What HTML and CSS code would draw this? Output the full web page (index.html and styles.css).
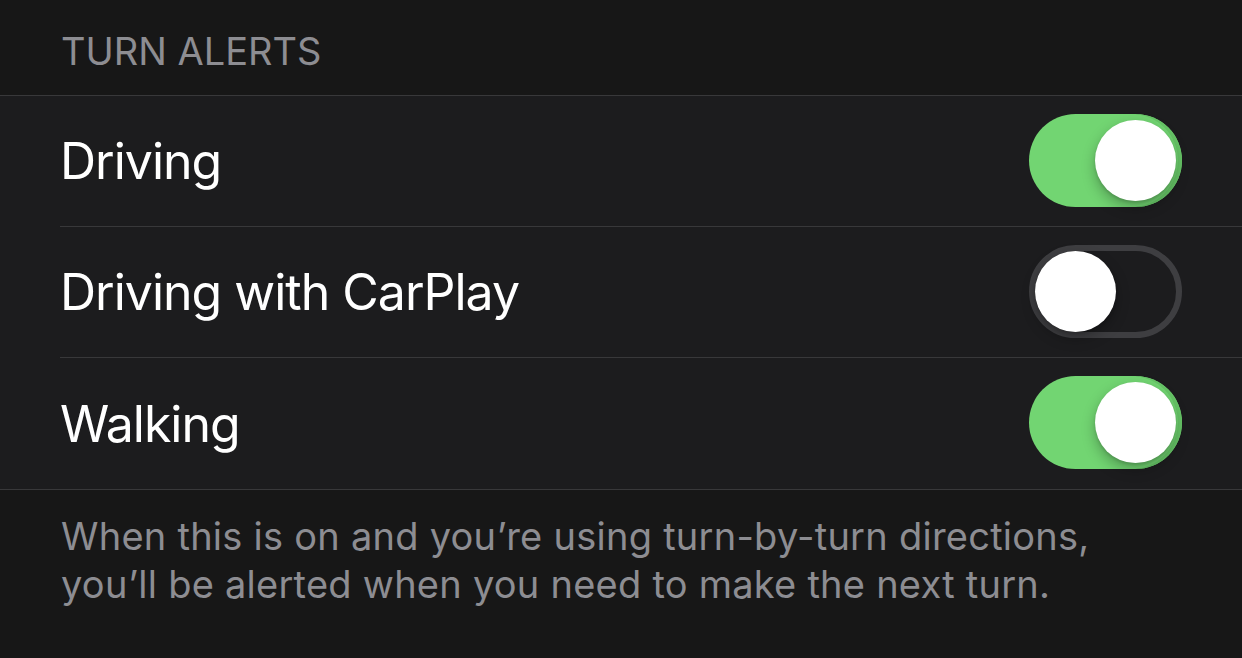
FILE: index.html
```html
<!DOCTYPE html>
<html lang="en">
<head>
<meta charset="utf-8">
<link rel="stylesheet" href="styles.css">
</head>
<body>
<div class="page">
  <div class="section-header">TURN ALERTS</div>
  <div class="group">
    <div class="row">
      <span class="label">Driving</span>
      <span class="switch on"><span class="thumb"></span></span>
    </div>
    <div class="row">
      <span class="label">Driving with CarPlay</span>
      <span class="switch off"><span class="thumb"></span></span>
    </div>
    <div class="row">
      <span class="label">Walking</span>
      <span class="switch on"><span class="thumb"></span></span>
    </div>
  </div>
  <div class="section-footer">When this is on and you’re using turn-by-turn directions, you’ll be alerted when you need to make the next turn.</div>
</div>
</body>
</html>
```
FILE: styles.css
```css
html, body {
  margin: 0;
  padding: 0;
  background: #171717;
}
.page {
  width: 1242px;
  height: 658px;
  overflow: hidden;
  font-family: Inter, "Noto Sans", sans-serif;
  -webkit-font-smoothing: antialiased;
}
.section-header {
  height: 95px;
  box-sizing: border-box;
  padding: 29px 0 0 61px;
  font-size: 38px;
  line-height: 44px;
  color: #8d8d92;
}
.group {
  background: #1c1c1e;
  border-top: 1px solid #38383a;
  border-bottom: 1px solid #38383a;
}
.row {
  margin-left: 60px;
  height: 131px;
  box-sizing: border-box;
  padding-right: 60px;
  display: flex;
  align-items: center;
  justify-content: space-between;
  border-bottom: 1px solid #38383a;
}
.row:last-child {
  border-bottom: none;
}
.label {
  font-size: 50px;
  color: #ffffff;
  letter-spacing: -1px;
}
.switch {
  position: relative;
  width: 153px;
  height: 93px;
  margin-top: -2px;
  box-sizing: border-box;
  border-radius: 47px;
  display: block;
}
.switch.on {
  background: #72d572;
  box-shadow: inset -4px 0 0 #66c466;
}
.switch.off {
  border: 6px solid #3e3e41;
  background: #1c1c1e;
}
.thumb {
  position: absolute;
  top: 6px;
  width: 81px;
  height: 81px;
  border-radius: 50%;
  background: #ffffff;
  box-shadow: 0 6px 14px rgba(0, 0, 0, 0.28), 0 2px 3px rgba(0, 0, 0, 0.12);
}
.switch.on .thumb {
  right: 6px;
}
.switch.off .thumb {
  top: 0;
  left: 0;
}
.section-footer {
  padding: 22px 120px 0 61px;
  font-size: 38px;
  line-height: 48px;
  letter-spacing: 0.25px;
  color: #8d8d92;
}
```
